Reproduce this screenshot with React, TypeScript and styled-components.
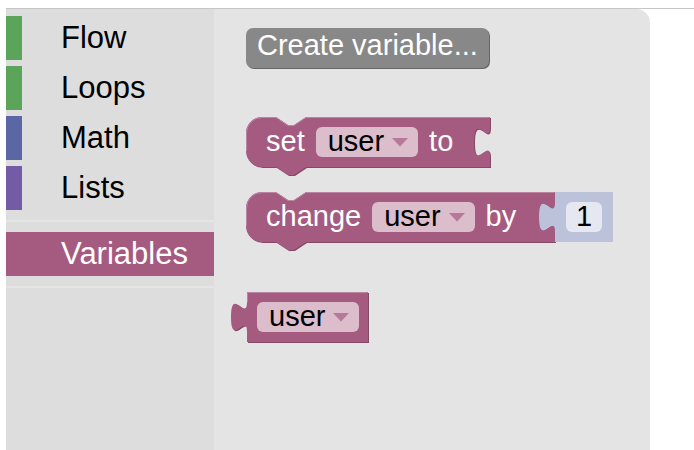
import React from 'react';
import styled, { createGlobalStyle } from 'styled-components';

const VAR = '#a55b80';
const VAR_DARK = '#844966';
const VAR_LIGHT = '#bb84a0';
const FIELD = '#dbbdcc';
const ARROW = '#b7789a';
const MATH_SHADOW = '#bdc2db';
const MATH_FIELD = '#e5e7f1';

const Global = createGlobalStyle`
  html, body { margin: 0; padding: 0; background: #fff; }
  body { font-family: "Liberation Sans", Arial, Helvetica, sans-serif; }
  * { box-sizing: border-box; }
`;

const Page = styled.div`
  width: 694px;
  height: 450px;
  overflow: hidden;
  padding: 8px 0 0 6px;
`;

const Workspace = styled.div`
  display: flex;
  height: 442px;
  border-top: 1px solid #c6c6c6;
`;

const Toolbox = styled.div`
  width: 208px;
  flex-shrink: 0;
  background: #dddddd;
  padding-top: 7px;
`;

const Category = styled.div<{ $color: string; $selected?: boolean }>`
  height: 44px;
  line-height: 44px;
  margin-bottom: 6px;
  border-left: 16px solid ${(p) => p.$color};
  background: ${(p) => (p.$selected ? p.$color : 'transparent')};
  color: ${(p) => (p.$selected ? '#fff' : '#000')};
  font-size: 31px;
  padding-left: 39px;
  white-space: nowrap;
`;

const Separator = styled.div`
  border-bottom: 2px solid #e5e5e5;
  margin: 10px 0;
`;

const Flyout = styled.div`
  width: 436px;
  flex-shrink: 0;
  background: #e4e4e4;
  border-top-right-radius: 14px;
  display: flex;
  flex-direction: column;
  align-items: flex-start;
  padding-left: 32px;
`;

const FlyoutButton = styled.button`
  margin-top: 19px;
  height: 40px;
  padding: 0 11px 5px;
  line-height: 35px;
  background: #888888;
  color: #fff;
  border: none;
  border-radius: 7px;
  box-shadow: 1px 1px 0 #666666;
  font-family: "Liberation Sans", Arial, Helvetica, sans-serif;
  font-size: 29px;
  white-space: nowrap;
`;

const Block = styled.div<{ $w: number; $pl: number; $mt?: number; $ml?: number }>`
  position: relative;
  width: ${(p) => p.$w}px;
  height: 50px;
  flex-shrink: 0;
  margin-top: ${(p) => p.$mt ?? 0}px;
  margin-left: ${(p) => p.$ml ?? 0}px;
  display: flex;
  align-items: center;
  gap: 11px;
  padding-left: ${(p) => p.$pl}px;
  color: #fff;
  font-size: 29px;
  white-space: nowrap;
`;

const BlockRow = styled.div<{ $mt: number }>`
  display: flex;
  margin-top: ${(p) => p.$mt}px;
`;

const Shape = styled.svg`
  position: absolute;
  left: 0;
  top: 0;
  overflow: visible;
  pointer-events: none;
`;

const Label = styled.span`
  position: relative;
  top: -1px;
`;

const Dropdown = styled.span`
  position: relative;
  display: inline-flex;
  align-items: center;
  gap: 8px;
  height: 30px;
  padding: 0 10px 1px 12px;
  background: ${FIELD};
  border-radius: 6px;
  color: #000;
`;

const NumberField = styled.span`
  position: relative;
  display: inline-flex;
  align-items: center;
  height: 30px;
  padding: 0 10px 1px;
  background: ${MATH_FIELD};
  border-radius: 6px;
  color: #000;
`;

const statementPath = (w: number) =>
  `M0,16 A16,16 0 0 1 16,0 H30 l12,8 6,0 12,-8 H${w} v10 c0,20 -16,-16 -16,15 s16,-5 16,15 V50 H60 l-12,8 -6,0 -12,-8 H16 A16,16 0 0 1 0,34 Z`;

const statementLight = (w: number) =>
  `M0.5,34 V16 A15.5,15.5 0 0 1 16,0.5 H30 l12,8 6,0 12,-8 H${w - 0.5}`;

const outputPath = (w: number) =>
  `M0,0 H${w} V50 H0 V40 c0,-20 -16,16 -16,-15 s16,5 16,-15 Z`;

const StatementShape: React.FC<{ w: number }> = ({ w }) => (
  <Shape width={w} height={50}>
    <path d={statementPath(w)} fill={VAR_DARK} transform="translate(1,1)" />
    <path d={statementPath(w)} fill={VAR} />
    <path d={statementLight(w)} fill="none" stroke={VAR_LIGHT} strokeWidth={1} />
  </Shape>
);

const OutputShape: React.FC<{ w: number; fill: string; dark?: string }> = ({ w, fill, dark }) => (
  <Shape width={w} height={50}>
    {dark && <path d={outputPath(w)} fill={dark} transform="translate(1,1)" />}
    <path d={outputPath(w)} fill={fill} />
    {dark && (
      <path d={`M0.5,10 V0.5 H${w - 0.5}`} fill="none" stroke={VAR_LIGHT} strokeWidth={1} />
    )}
  </Shape>
);

const Arrow = () => (
  <svg width="16" height="9" viewBox="0 0 16 9" style={{ position: 'relative', top: 1 }}>
    <polygon points="0,0 16,0 8,8.5" fill={ARROW} />
  </svg>
);

const VarField = () => (
  <Dropdown>
    <span>user</span>
    <Arrow />
  </Dropdown>
);

export default function App() {
  return (
    <Page>
      <Global />
      <Workspace>
        <Toolbox>
          <Category $color="#5ba55b">Flow</Category>
          <Category $color="#5ba55b">Loops</Category>
          <Category $color="#5b67a5">Math</Category>
          <Category $color="#745ba5">Lists</Category>
          <Separator />
          <Category $color={VAR} $selected>
            Variables
          </Category>
          <Separator />
        </Toolbox>
        <Flyout>
          <FlyoutButton>Create variable...</FlyoutButton>

          <Block $w={244} $pl={20} $mt={49}>
            <StatementShape w={244} />
            <Label>set</Label>
            <VarField />
            <Label>to</Label>
          </Block>

          <BlockRow $mt={25}>
            <Block $w={309} $pl={20}>
              <StatementShape w={309} />
              <Label>change</Label>
              <VarField />
              <Label>by</Label>
            </Block>
            <Block $w={58} $pl={11}>
              <OutputShape w={58} fill={MATH_SHADOW} />
              <NumberField>1</NumberField>
            </Block>
          </BlockRow>

          <Block $w={121} $pl={10} $mt={50} $ml={1}>
            <OutputShape w={121} fill={VAR} dark={VAR_DARK} />
            <VarField />
          </Block>
        </Flyout>
      </Workspace>
    </Page>
  );
}
